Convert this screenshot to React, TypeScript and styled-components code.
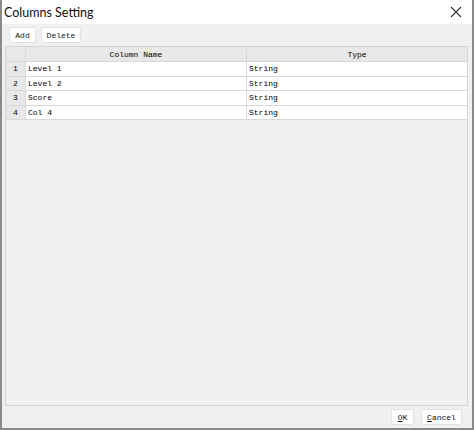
import styled, { createGlobalStyle } from "styled-components";

const GlobalStyle = createGlobalStyle`
  html, body {
    margin: 0;
    padding: 0;
    background: #f0f0f0;
  }
`;

const Window = styled.div`
  width: 474px;
  height: 430px;
  box-sizing: border-box;
  border-left: 2px solid #8a8a8a;
  border-right: 2px solid #8a8a8a;
  border-bottom: 2px solid #8a8a8a;
  background: #f0f0f2;
  display: flex;
  flex-direction: column;
  overflow: hidden;
`;

const TitleBar = styled.div`
  height: 24px;
  background: #ffffff;
  display: flex;
  align-items: center;
  justify-content: space-between;
  padding: 0 10px 0 2px;
`;

const Title = styled.span`
  font-family: Lato, "Noto Sans", sans-serif;
  font-size: 12.5px;
  color: #111;
`;

const Toolbar = styled.div`
  display: flex;
  gap: 5px;
  padding: 3px 7px 0;
`;

const Button = styled.button<{ $width: number }>`
  width: ${(p) => p.$width}px;
  height: 16px;
  padding: 0;
  background: #ffffff;
  border: 1px solid #e2e2e2;
  border-radius: 2px;
  font-family: "Liberation Mono", "DejaVu Sans Mono", monospace;
  font-size: 8px;
  color: #111;
  display: flex;
  align-items: center;
  justify-content: center;
`;

const GridBox = styled.div`
  margin: 3px 4px 0 3px;
  flex: 1;
  border: 1px solid #d4d4d4;
  background: #f0f0f2;
`;

const Table = styled.div`
  display: grid;
  grid-template-columns: 20px 221px 221px;
  grid-template-rows: 15px repeat(4, 14.5px);
`;

const Cell = styled.div<{ $head?: boolean; $center?: boolean }>`
  box-sizing: border-box;
  border-right: 1px solid #d8d8d8;
  border-bottom: 1px solid #d8d8d8;
  background: ${(p) => (p.$head ? "#e8e8e8" : "#ffffff")};
  font-family: "Liberation Mono", "DejaVu Sans Mono", monospace;
  font-size: 8px;
  color: #000;
  display: flex;
  align-items: center;
  justify-content: ${(p) => (p.$center ? "center" : "flex-start")};
  padding-left: ${(p) => (p.$center ? "0" : "2px")};
  white-space: nowrap;
`;

const Footer = styled.div`
  display: flex;
  justify-content: flex-end;
  gap: 7px;
  padding: 3px 10px 3px;
`;

const rows = [
  { name: "Level 1", type: "String" },
  { name: "Level 2", type: "String" },
  { name: "Score", type: "String" },
  { name: "Col 4", type: "String" },
];

export default function App() {
  return (
    <>
      <GlobalStyle />
      <Window>
        <TitleBar>
          <Title>Columns Setting</Title>
          <svg width="12" height="12" viewBox="0 0 12 12">
            <path d="M1 1L11 11M11 1L1 11" stroke="#333" strokeWidth="1.1" />
          </svg>
        </TitleBar>
        <Toolbar>
          <Button $width={27}>Add</Button>
          <Button $width={40}>Delete</Button>
        </Toolbar>
        <GridBox>
          <Table>
            <Cell $head $center />
            <Cell $head $center>Column Name</Cell>
            <Cell $head $center>Type</Cell>
            {rows.map((r, i) => (
              <>
                <Cell key={`n${i}`} $head $center>{i + 1}</Cell>
                <Cell key={`c${i}`}>{r.name}</Cell>
                <Cell key={`t${i}`}>{r.type}</Cell>
              </>
            ))}
          </Table>
        </GridBox>
        <Footer>
          <Button $width={23}><u>O</u>K</Button>
          <Button $width={41}><u>C</u>ancel</Button>
        </Footer>
      </Window>
    </>
  );
}
